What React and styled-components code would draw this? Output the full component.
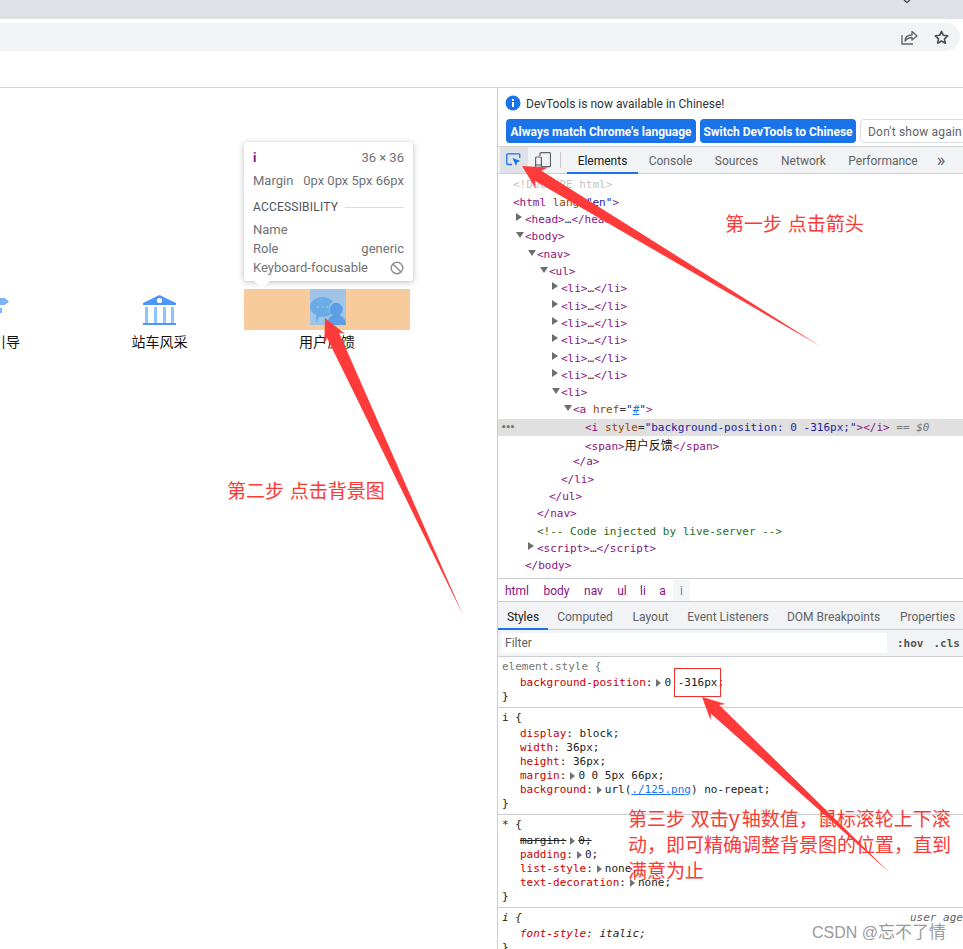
import React from 'react';
import styled, { createGlobalStyle } from 'styled-components';

const Global = createGlobalStyle`
  html, body { margin: 0; padding: 0; background: #fff; }
  * { box-sizing: border-box; }
`;

const UI = `Roboto, "Open Sans", "Noto Sans CJK SC", sans-serif`;
const MONO = `"DejaVu Sans Mono", "Noto Sans CJK SC", monospace`;
const CJK = `"Noto Sans CJK SC", "Noto Sans", sans-serif`;

const Screen = styled.div`
  position: relative;
  width: 963px;
  height: 949px;
  overflow: hidden;
  display: flex;
  flex-direction: column;
  background: #fff;
`;
const TabStrip = styled.div`
  height: 19px;
  flex: none;
  background: #dee1e6;
  display: flex;
  justify-content: flex-end;
  padding-right: 51px;
`;
const AddressRow = styled.div`
  height: 69px;
  flex: none;
  padding: 4px 3px 0 0;
  border-bottom: 1px solid #d3d3d3;
`;
const Omnibox = styled.div`
  height: 28px;
  background: #f1f3f4;
  border-radius: 0 14px 14px 0;
  display: flex;
  align-items: center;
  justify-content: flex-end;
  gap: 16px;
  padding-right: 11px;
`;
const Main = styled.div`
  flex: 1;
  min-height: 0;
  display: flex;
`;
const PagePane = styled.div`
  position: relative;
  width: 497px;
  flex: none;
  overflow: hidden;
  padding-top: 201px;
`;
const NavList = styled.ul`
  list-style: none;
  margin: 0 0 0 -88px;
  padding: 0;
  display: flex;
`;
const NavItem = styled.li`
  width: 166px;
  flex: none;
  display: flex;
  flex-direction: column;
`;
const IconMargin = styled.div`
  padding: 0 0 5px 66px;
  background: ${p => (p.$active ? '#f8cb9c' : 'transparent')};
`;
const IconBox = styled.i`
  display: block;
  width: 36px;
  height: 36px;
  background: ${p => (p.$active ? '#a0c4e8' : 'transparent')};
  svg { display: block; overflow: visible; }
`;
const NavLabel = styled.span`
  font: 14px/22px ${CJK};
  color: #111;
  text-align: center;
  padding-right: ${p => p.$nudge || 0}px;
`;
const Tooltip = styled.div`
  position: absolute;
  left: 244px;
  top: 54px;
  width: 169px;
  height: 139px;
  background: #fff;
  border-radius: 3px;
  box-shadow: 0 1px 6px rgba(60, 64, 67, 0.35);
  padding: 6px 9px 0;
  font: 13px/19px ${UI};
  color: #6f7276;
  &::after {
    content: '';
    position: absolute;
    left: 10px;
    bottom: -7px;
    border: 8px solid transparent;
    border-bottom: 0;
    border-top: 7px solid #fff;
  }
`;
const TipRow = styled.div`
  display: flex;
  justify-content: space-between;
  align-items: center;
  white-space: nowrap;
  margin-bottom: ${p => p.$mb || 0}px;
`;
const TipName = styled.span`
  color: #881280;
  font-weight: 700;
`;
const TipHeading = styled.div`
  display: flex;
  align-items: center;
  gap: 7px;
  color: #505357;
  font-size: 12px;
  letter-spacing: 0.2px;
  margin-bottom: 3px;
  &::after { content: ''; flex: 1; height: 1px; background: #dcdcdc; }
`;

const Devtools = styled.div`
  flex: 1;
  min-width: 0;
  border-left: 1px solid #cbcdd1;
  display: flex;
  flex-direction: column;
  font: 12px ${UI};
  color: #333;
`;
const InfoBar = styled.div`
  height: 58px;
  flex: none;
  padding: 5px 0 0 7px;
`;
const InfoLine = styled.div`
  display: flex;
  align-items: center;
  gap: 5px;
  height: 20px;
  color: #303338;
  white-space: nowrap;
  span { padding-top: 2px; }
`;
const InfoButtons = styled.div`
  display: flex;
  gap: 4px;
  margin: 6px 0 0 1px;
  white-space: nowrap;
`;
const Btn = styled.div`
  flex: none;
  width: ${p => p.$w}px;
  height: 24px;
  padding-top: 1px;
  border-radius: 4px;
  display: flex;
  align-items: center;
  justify-content: center;
  font-weight: ${p => (p.$primary ? 700 : 400)};
  font-size: 12px;
  letter-spacing: ${p => (p.$primary ? 0 : 0.2)}px;
  color: ${p => (p.$primary ? '#fff' : '#5f6368')};
  background: ${p => (p.$primary ? '#1a73e8' : '#fff')};
  border: ${p => (p.$primary ? 'none' : '1px solid #dadce0')};
`;
const MainTabs = styled.div`
  height: 28px;
  flex: none;
  background: #f1f3f4;
  border-top: 1px solid #cbcdd1;
  border-bottom: 1px solid #cbcdd1;
  display: flex;
  align-items: stretch;
  padding-left: 2px;
`;
const ToolBtn = styled.div`
  width: ${p => p.$w}px;
  display: flex;
  align-items: center;
  justify-content: center;
  background: ${p => (p.$on ? '#dee1e6' : 'transparent')};
`;
const Divider = styled.div`
  width: 1px;
  height: 16px;
  background: #c4c7cc;
  align-self: center;
  margin: 0 6px 0 2px;
`;
const TabItem = styled.div`
  flex: none;
  width: ${p => p.$w}px;
  padding-top: ${p => p.$pt || 0}px;
  display: flex;
  align-items: center;
  justify-content: center;
  font-size: ${p => p.$fs || 12}px;
  color: ${p => (p.$on ? '#202124' : '#5f6368')};
  white-space: nowrap;
  border-bottom: 2px solid ${p => (p.$on ? '#1a73e8' : 'transparent')};
  margin-bottom: -1px;
`;
const DomPane = styled.div`
  height: 404px;
  flex: none;
  padding-top: 2.4px;
  overflow: hidden;
  font: 11px/17.32px ${MONO};
  color: #333;
`;
const DomRow = styled.div`
  position: relative;
  height: 17.32px;
  white-space: nowrap;
  padding-left: ${p => 15 + p.$depth * 12}px;
  background: ${p => (p.$sel ? '#e0e0e0' : 'transparent')};
`;
const Dots = styled.span`
  position: absolute;
  left: 3px;
  top: 0;
  color: #777;
  font-size: 9px;
  letter-spacing: -1px;
  font-weight: 700;
`;
const Caret = styled.span`
  display: inline-block;
  width: 0;
  height: 0;
  margin-left: -9px;
  vertical-align: 2px;
  ${p => (p.$open
    ? 'border-left: 4px solid transparent; border-right: 4px solid transparent; border-top: 6px solid #6e6e6e; margin-right: 1px;'
    : 'border-top: 4px solid transparent; border-bottom: 4px solid transparent; border-left: 6px solid #6e6e6e; margin-right: 3px;')}
`;
const Tag = styled.span`color: #881280;`;
const AttrName = styled.span`color: #994500;`;
const AttrVal = styled.span`color: #1a1aa6;`;
const AttrLink = styled.span`color: #1a73e8; text-decoration: underline;`;
const Comment = styled.span`color: #236e25;`;
const Faded = styled.span`color: #c4c4c4;`;
const Hint = styled.span`color: #777; font-style: italic;`;
const Cn = styled.span`font-family: ${CJK}; color: #111; font-size: 12px;`;

const Crumbs = styled.div`
  height: 24px;
  flex: none;
  border-top: 1px solid #cbcdd1;
  border-bottom: 1px solid #cbcdd1;
  display: flex;
  align-items: stretch;
  color: #881280;
`;
const Crumb = styled.div`
  display: flex;
  align-items: center;
  justify-content: center;
  width: ${p => p.$w}px;
  padding-top: 1px;
  background: ${p => (p.$on ? '#f1f3f4' : 'transparent')};
  opacity: ${p => (p.$on ? 0.7 : 1)};
`;
const SubTabs = styled.div`
  height: 28px;
  flex: none;
  background: #f1f3f4;
  border-bottom: 1px solid #cbcdd1;
  display: flex;
  align-items: stretch;
`;
const FilterBar = styled.div`
  height: 27px;
  flex: none;
  background: #f1f3f4;
  border-bottom: 1px solid #cbcdd1;
  display: flex;
  align-items: center;
  padding-left: 3px;
`;
const FilterInput = styled.div`
  flex: none;
  width: 386px;
  height: 20px;
  background: #fff;
  padding-left: 4px;
  line-height: 21px;
  color: #5f6368;
`;
const FilterBtn = styled.span`
  flex: none;
  font: 700 11px ${MONO};
  color: #555;
  margin-left: 10px;
  white-space: nowrap;
`;
const StyleBlock = styled.div`
  flex: none;
  padding: 2px 0 3px 4px;
  border-bottom: 1px solid #cbcdd1;
  font: 11px/14px ${MONO};
  color: #222;
  white-space: nowrap;
  ${p => p.$last && 'border-bottom: none;'}
`;
const Selector = styled.div`
  height: 15px;
  line-height: 15px;
  margin-bottom: 2px;
  display: flex;
  color: ${p => (p.$muted ? '#777' : '#222')};
  font-style: ${p => (p.$italic ? 'italic' : 'normal')};
`;
const Source = styled.span`
  margin-left: auto;
  width: 53px;
  overflow: hidden;
  color: #5f6368;
  font-style: italic;
`;
const Decl = styled.div`
  height: 14px;
  padding-left: 18px;
  font-style: ${p => (p.$italic ? 'italic' : 'normal')};
  text-decoration: ${p => (p.$struck ? 'line-through' : 'none')};
`;
const PropName = styled.span`color: #c80000;`;
const Expand = styled.span`
  display: inline-block;
  margin: 0 3px 0 4px;
  border-top: 4px solid transparent;
  border-bottom: 4px solid transparent;
  border-left: 5px solid #727272;
  vertical-align: -0.5px;
`;

const Overlay = styled.svg`
  position: absolute;
  inset: 0;
  pointer-events: none;
`;
const RedBox = styled.div`
  position: absolute;
  left: 674px;
  top: 668px;
  width: 47px;
  height: 29px;
  border: 1px solid #f0302c;
`;
const Note = styled.div`
  position: absolute;
  left: ${p => p.$x}px;
  top: ${p => p.$y}px;
  font: 400 19px/26px ${CJK};
  color: #f93a34;
  white-space: nowrap;
  word-spacing: 1.5px;
`;
const NoteLatin = styled.span`
  font-size: 21px;
  padding-right: 2px;
`;
const Watermark = styled.div`
  position: absolute;
  left: 812px;
  top: 919px;
  font: 16px/24px "Liberation Sans", ${CJK};
  color: #9a9a9a;
  white-space: nowrap;
  text-shadow: 0 0 2px #fff;
`;
const WatermarkCn = styled.span`
  font-size: 17px;
  font-family: ${CJK};
`;

function arrowPoints([tx, ty], [bx, by], headLen, wing, neckAt, neck) {
  const len = Math.hypot(bx - tx, by - ty);
  const ux = (bx - tx) / len;
  const uy = (by - ty) / len;
  const nx = -uy;
  const ny = ux;
  const pt = (a, s) => `${(tx + ux * a + nx * s).toFixed(1)},${(ty + uy * a + ny * s).toFixed(1)}`;
  return [pt(0, 0), pt(headLen, wing), pt(neckAt, neck), `${bx},${by}`, pt(neckAt, -neck), pt(headLen, -wing)].join(' ');
}

const ShareIcon = () => (
  <svg width="17" height="16" viewBox="0 0 17 16" fill="none" stroke="#5f6368" strokeWidth="1.3">
    <path d="M1 6v9h11" />
    <path d="M4 12c0-4 3-6 7-6V2.500l5 4.500-5 4V8.500c-3 0-5 1-7 3.500z" strokeLinejoin="round" />
  </svg>
);
const StarIcon = () => (
  <svg width="15" height="15" viewBox="0 0 15 15" fill="none" stroke="#4b4f54" strokeWidth="1.6" strokeLinejoin="round">
    <path d="M7.500 1.300l1.900 4 4.300.5-3.200 3 .9 4.400-3.900-2.200-3.900 2.200.9-4.400-3.200-3 4.300-.5z" />
  </svg>
);
const InfoIcon = () => (
  <svg width="16" height="16" viewBox="0 0 16 16">
    <circle cx="8" cy="8" r="7.500" fill="#1a73e8" />
    <rect x="7" y="7" width="2" height="5" fill="#fff" />
    <rect x="7" y="4" width="2" height="2" fill="#fff" />
  </svg>
);
const InspectIcon = () => (
  <svg width="16" height="14" viewBox="0 0 16 14" fill="none">
    <path d="M6 11.500H1.800a1 1 0 0 1-1-1V1.800a1 1 0 0 1 1-1h11a1 1 0 0 1 1 1V5" stroke="#1a73e8" strokeWidth="1.300" />
    <path d="M6.500 5l8 3-3.300 1.200-1.200 3.800z" fill="#1a73e8" />
  </svg>
);
const DeviceIcon = () => (
  <svg width="16" height="16" viewBox="0 0 16 16" fill="none" stroke="#5f6368" strokeWidth="1.200">
    <path d="M5 4V1.600a1 1 0 0 1 1-1h8.500a1 1 0 0 1 1 1v12a1 1 0 0 1-1 1H7" />
    <rect x="0.600" y="5" width="5.800" height="10.400" rx="1" />
    <path d="M.6 13h5.800" />
  </svg>
);
const NoIcon = () => (
  <svg width="14" height="14" viewBox="0 0 14 14" fill="none" stroke="#8a8d91" strokeWidth="1.400">
    <circle cx="7" cy="7" r="5.800" />
    <path d="M3 3l8 8" />
  </svg>
);
const GuideIcon = () => (
  <svg width="36" height="36" viewBox="0 0 36 36">
    <path d="M14 9h13l4 3.500-4 3.500H14z" fill="#7ab6ff" />
    <path d="M14 19h10v5H14z" fill="#7ab6ff" />
  </svg>
);
const BankIcon = () => (
  <svg width="36" height="36" viewBox="0 0 36 36">
    <path d="M15.500 6L-1 14v2h33v-2z" fill="#4f97f7" />
    <circle cx="15.500" cy="11.500" r="2.600" fill="#fff" />
    <g fill="#8cc4ff">
      <rect x="1" y="18" width="3" height="16" />
      <rect x="10" y="18" width="3" height="16" />
      <rect x="19" y="18" width="3" height="16" />
      <rect x="27" y="18" width="3" height="16" />
    </g>
    <rect x="-1" y="34" width="33" height="2" fill="#4f97f7" />
  </svg>
);
const FeedbackIcon = () => (
  <svg width="36" height="36" viewBox="0 0 36 36">
    <path d="M12.500 8C19.500 8 25 12.500 25 18s-5.500 10-12.500 10c-1 0-2 0-3-.3L6 33.500l.2-7.300C2.300 24.300 0 21.400 0 18 0 12.500 5.500 8 12.500 8z" fill="#6cace6" />
    <g fill="#8fc0ea">
      <circle cx="8" cy="18" r="1" />
      <circle cx="12.500" cy="18" r="1" />
      <circle cx="17" cy="18" r="1" />
    </g>
    <circle cx="26" cy="19" r="7" fill="#a0c4e8" />
    <path d="M17 36c0-5 2.500-8.500 6-10a6.500 6.500 0 1 1 6.500 0c3.500 1.500 6.500 5 6.500 10z" fill="#5c9de6" />
  </svg>
);

const C = ({ open }) => <Caret $open={open} />;

const domRows = [
  [0, null, <Faded>&lt;!DOCTYPE html&gt;</Faded>],
  [0, null, <><Tag>&lt;html</Tag> <AttrName>lang</AttrName>=<AttrVal>"en"</AttrVal><Tag>&gt;</Tag></>],
  [1, false, <><Tag>&lt;head&gt;</Tag>…<Tag>&lt;/head&gt;</Tag></>],
  [1, true, <Tag>&lt;body&gt;</Tag>],
  [2, true, <Tag>&lt;nav&gt;</Tag>],
  [3, true, <Tag>&lt;ul&gt;</Tag>],
  [4, false, <><Tag>&lt;li&gt;</Tag>…<Tag>&lt;/li&gt;</Tag></>],
  [4, false, <><Tag>&lt;li&gt;</Tag>…<Tag>&lt;/li&gt;</Tag></>],
  [4, false, <><Tag>&lt;li&gt;</Tag>…<Tag>&lt;/li&gt;</Tag></>],
  [4, false, <><Tag>&lt;li&gt;</Tag>…<Tag>&lt;/li&gt;</Tag></>],
  [4, false, <><Tag>&lt;li&gt;</Tag>…<Tag>&lt;/li&gt;</Tag></>],
  [4, false, <><Tag>&lt;li&gt;</Tag>…<Tag>&lt;/li&gt;</Tag></>],
  [4, true, <Tag>&lt;li&gt;</Tag>],
  [5, true, <><Tag>&lt;a</Tag> <AttrName>href</AttrName>=<AttrVal>"<AttrLink>#</AttrLink>"</AttrVal><Tag>&gt;</Tag></>],
  [6, null, <><Tag>&lt;i</Tag> <AttrName>style</AttrName>=<AttrVal>"background-position: 0 -316px;"</AttrVal><Tag>&gt;&lt;/i&gt;</Tag> <Hint>== $0</Hint></>, true],
  [6, null, <><Tag>&lt;span&gt;</Tag><Cn>用户反馈</Cn><Tag>&lt;/span&gt;</Tag></>],
  [5, null, <Tag>&lt;/a&gt;</Tag>],
  [4, null, <Tag>&lt;/li&gt;</Tag>],
  [3, null, <Tag>&lt;/ul&gt;</Tag>],
  [2, null, <Tag>&lt;/nav&gt;</Tag>],
  [2, null, <Comment>&lt;!-- Code injected by live-server --&gt;</Comment>],
  [2, false, <><Tag>&lt;script&gt;</Tag>…<Tag>&lt;/script&gt;</Tag></>],
  [1, null, <Tag>&lt;/body&gt;</Tag>],
];

const crumbs = [['html', 38], ['body', 41], ['nav', 33], ['ul', 24], ['li', 18], ['a', 21], ['i', 17]];
const subTabs = [['Styles', 50], ['Computed', 74], ['Layout', 57], ['Event Listeners', 98], ['DOM Breakpoints', 113], ['Properties', 75]];
const mainTabs = [['Elements', 71], ['Console', 65], ['Sources', 67], ['Network', 67], ['Performance', 92]];

export default function App() {
  return (
    <Screen>
      <Global />
      <TabStrip>
        <svg width="10" height="3" viewBox="0 0 10 3"><path d="M2 0l3 2.500L8 0" fill="none" stroke="#3c4043" strokeWidth="1.200" /></svg>
      </TabStrip>
      <AddressRow>
        <Omnibox>
          <ShareIcon />
          <StarIcon />
        </Omnibox>
      </AddressRow>
      <Main>
        <PagePane>
          <NavList>
            <NavItem>
              <IconMargin><IconBox><GuideIcon /></IconBox></IconMargin>
              <NavLabel $nudge={6}>服务引导</NavLabel>
            </NavItem>
            <NavItem>
              <IconMargin><IconBox><BankIcon /></IconBox></IconMargin>
              <NavLabel $nudge={3}>站车风采</NavLabel>
            </NavItem>
            <NavItem>
              <IconMargin $active><IconBox $active><FeedbackIcon /></IconBox></IconMargin>
              <NavLabel>用户反馈</NavLabel>
            </NavItem>
          </NavList>
          <Tooltip>
            <TipRow $mb={4}><TipName>i</TipName><span>36 × 36</span></TipRow>
            <TipRow $mb={8}><span>Margin</span><span>0px 0px 5px 66px</span></TipRow>
            <TipHeading>ACCESSIBILITY</TipHeading>
            <TipRow><span>Name</span></TipRow>
            <TipRow><span>Role</span><span>generic</span></TipRow>
            <TipRow><span>Keyboard-focusable</span><NoIcon /></TipRow>
          </Tooltip>
        </PagePane>
        <Devtools>
          <InfoBar>
            <InfoLine><InfoIcon /><span>DevTools is now available in Chinese!</span></InfoLine>
            <InfoButtons>
              <Btn $primary $w={190}>Always match Chrome's language</Btn>
              <Btn $primary $w={156}>Switch DevTools to Chinese</Btn>
              <Btn $w={110}>Don't show again</Btn>
            </InfoButtons>
          </InfoBar>
          <MainTabs>
            <ToolBtn $w={28} $on><InspectIcon /></ToolBtn>
            <ToolBtn $w={30}><DeviceIcon /></ToolBtn>
            <Divider />
            {mainTabs.map(([t, w], i) => <TabItem key={t} $w={w} $pt={2} $on={i === 0}>{t}</TabItem>)}
            <TabItem $w={24} $fs={18}>»</TabItem>
          </MainTabs>
          <DomPane>
            {domRows.map(([depth, open, content, sel], i) => (
              <DomRow key={i} $depth={depth} $sel={sel}>
                {sel && <Dots>•••</Dots>}
                {open !== null && <C open={open} />}
                {content}
              </DomRow>
            ))}
          </DomPane>
          <Crumbs>
            {crumbs.map(([c, w], i) => <Crumb key={c} $w={w} $on={i === crumbs.length - 1}>{c}</Crumb>)}
          </Crumbs>
          <SubTabs>
            {subTabs.map(([t, w], i) => <TabItem key={t} $w={w} $pt={3} $on={i === 0}>{t}</TabItem>)}
          </SubTabs>
          <FilterBar>
            <FilterInput>Filter</FilterInput>
            <FilterBtn>:hov</FilterBtn>
            <FilterBtn>.cls</FilterBtn>
          </FilterBar>
          <StyleBlock>
            <Selector $muted>element.style {'{'}</Selector>
            <Decl><PropName>background-position</PropName>:<Expand />0 -316px;</Decl>
            <div>{'}'}</div>
          </StyleBlock>
          <StyleBlock>
            <Selector>i {'{'}</Selector>
            <Decl><PropName>display</PropName>: block;</Decl>
            <Decl><PropName>width</PropName>: 36px;</Decl>
            <Decl><PropName>height</PropName>: 36px;</Decl>
            <Decl><PropName>margin</PropName>:<Expand />0 0 5px 66px;</Decl>
            <Decl><PropName>background</PropName>:<Expand />url(<AttrLink>./125.png</AttrLink>) no-repeat;</Decl>
            <div>{'}'}</div>
          </StyleBlock>
          <StyleBlock>
            <Selector>* {'{'}</Selector>
            <Decl $struck>margin:<Expand />0;</Decl>
            <Decl><PropName>padding</PropName>:<Expand />0;</Decl>
            <Decl><PropName>list-style</PropName>:<Expand />none;</Decl>
            <Decl><PropName>text-decoration</PropName>:<Expand />none;</Decl>
            <div>{'}'}</div>
          </StyleBlock>
          <StyleBlock $last>
            <Selector $italic>i {'{'}<Source>user agent stylesheet</Source></Selector>
            <Decl $italic><PropName>font-style</PropName>: italic;</Decl>
            <div>{'}'}</div>
          </StyleBlock>
        </Devtools>
      </Main>
      <RedBox />
      <Overlay width="963" height="949" viewBox="0 0 963 949">
        <g fill="#ff3a3a">
          <polygon points={arrowPoints([522, 166], [820, 346], 23, 12, 19, 6)} />
          <polygon points={arrowPoints([325, 318], [463, 615], 23, 11.5, 19, 6.5)} />
          <polygon points={arrowPoints([702, 697], [890, 873], 22, 11, 18, 6)} />
        </g>
      </Overlay>
      <Note $x={725} $y={210}>第一步 点击箭头</Note>
      <Note $x={227} $y={477}>第二步 点击背景图</Note>
      <Note $x={628} $y={804}>第三步 双击<NoteLatin>y</NoteLatin>轴数值，鼠标滚轮上下滚<br />动，即可精确调整背景图的位置，直到<br />满意为止</Note>
      <Watermark>CSDN @<WatermarkCn>忘不了情</WatermarkCn></Watermark>
    </Screen>
  );
}
